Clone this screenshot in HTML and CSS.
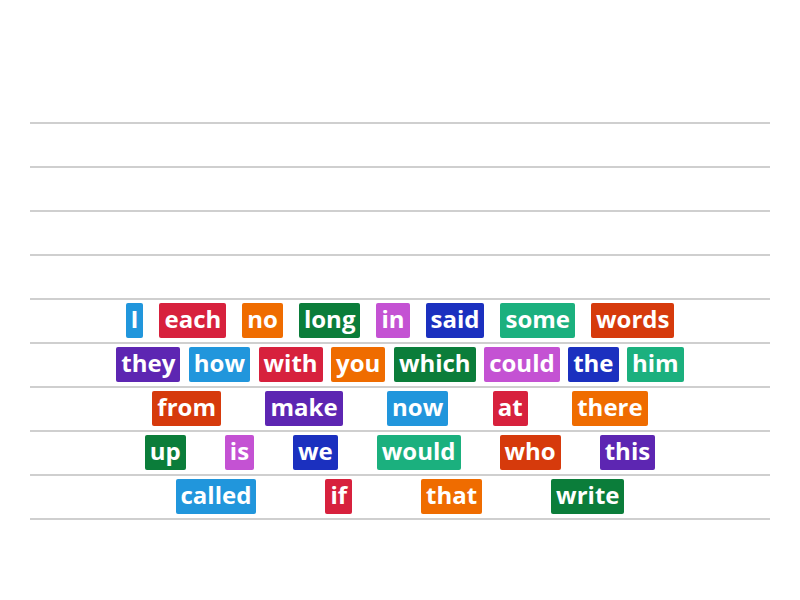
FILE: index.html
```html
<!DOCTYPE html>
<html>
<head>
<meta charset="utf-8">
<link rel="stylesheet" href="styles.css">
</head>
<body>
<div class="board">
  <div class="row"></div>
  <div class="row"></div>
  <div class="row"></div>
  <div class="row"></div>
  <div class="row g1">
    <span class="w blue">I</span><span class="w red">each</span><span class="w orange">no</span><span class="w green">long</span><span class="w magenta">in</span><span class="w navy">said</span><span class="w teal">some</span><span class="w rust">words</span>
  </div>
  <div class="row g2">
    <span class="w purple">they</span><span class="w blue">how</span><span class="w red">with</span><span class="w orange">you</span><span class="w green">which</span><span class="w magenta">could</span><span class="w navy">the</span><span class="w teal">him</span>
  </div>
  <div class="row g3">
    <span class="w rust">from</span><span class="w purple">make</span><span class="w blue">now</span><span class="w red">at</span><span class="w orange">there</span>
  </div>
  <div class="row g4">
    <span class="w green">up</span><span class="w magenta">is</span><span class="w navy">we</span><span class="w teal">would</span><span class="w rust">who</span><span class="w purple">this</span>
  </div>
  <div class="row g5 last">
    <span class="w blue">called</span><span class="w red">if</span><span class="w orange">that</span><span class="w green">write</span>
  </div>
</div>
</body>
</html>
```

FILE: styles.css
```css
html, body {
  margin: 0;
  padding: 0;
  background: #fff;
}
body {
  font-family: "Open Sans", "Liberation Sans", sans-serif;
}
.board {
  padding: 122px 30px 0 30px;
}
.row {
  box-sizing: border-box;
  height: 44px;
  padding-top: 3px;
  border-top: 2px solid #cfcfcf;
  display: flex;
  align-items: flex-start;
  justify-content: center;
}
.row.last {
  height: 46px;
  border-bottom: 2px solid #cfcfcf;
}
.g1 { column-gap: 16px; }
.g2 { column-gap: 8.5px; }
.g3 { column-gap: 44.5px; }
.g4 { column-gap: 39px; }
.g5 { column-gap: 69px; }
.w {
  box-sizing: border-box;
  display: inline-block;
  height: 35px;
  line-height: 31px;
  padding: 0 5px 4px 5px;
  border-radius: 2px;
  color: #fff;
  font-size: 24px;
  font-weight: 700;
}
.blue { background: #2196dc; }
.red { background: #d7213d; }
.orange { background: #ef6c00; }
.green { background: #0b7d3a; }
.magenta { background: #c452d3; }
.navy { background: #1b30bf; }
.teal { background: #1bb07e; }
.rust { background: #d63a0c; }
.purple { background: #5d26b2; }
```
